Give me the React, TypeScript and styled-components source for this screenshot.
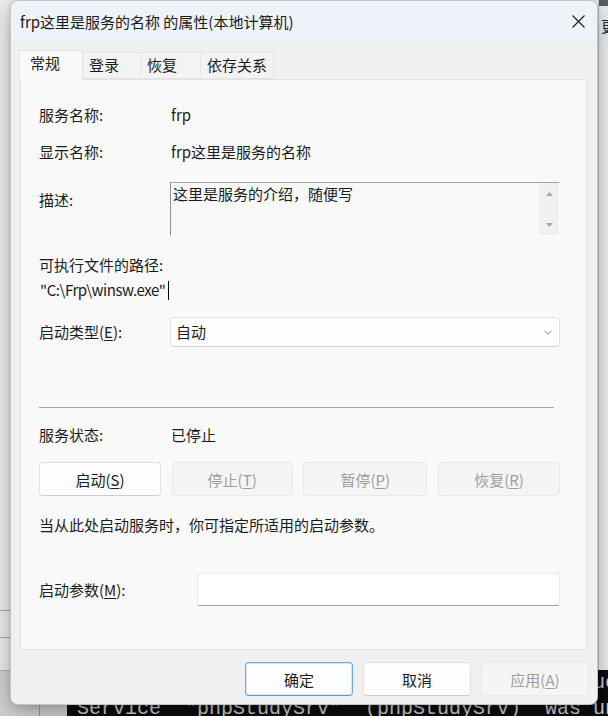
import React from "react";
import styled, { createGlobalStyle } from "styled-components";

const GlobalStyle = createGlobalStyle`
  html, body {
    margin: 0;
    padding: 0;
    background: #ebebeb;
  }
  body {
    font-family: "Noto Sans CJK SC", "Noto Sans", sans-serif;
    color: #1b1b1b;
  }
  * { box-sizing: border-box; }
`;

const Desktop = styled.div`
  position: relative;
  width: 608px;
  height: 716px;
  overflow: hidden;
  background: #ececec;
`;

/* ---------- windows lying behind the dialog ---------- */

const LeftWindow = styled.div`
  position: absolute;
  left: 0;
  top: 0;
  width: 67px;
  height: 716px;
  background: #eeeeee;
  display: flex;
  flex-direction: column;
`;

const LeftRule = styled.div<{ $mt: number }>`
  margin-top: ${(p) => p.$mt}px;
  height: 1px;
  background: #a9a9a9;
`;

const LeftFoot = styled.div`
  margin-top: auto;
  height: 46px;
  background: #d3d3d3;
  border-top: 1px solid #b8b8b8;
  display: flex;
`;

const LeftFootCell = styled.div`
  width: 40px;
  border-right: 1px solid #9c9c9c;
`;

const RightWindow = styled.div`
  position: absolute;
  left: 598px;
  top: 0;
  width: 10px;
  height: 672px;
  background: #f0f0f0;
  border-left: 1px solid #c4c4c4;
  display: flex;
  flex-direction: column;
`;

const RightTop = styled.div`
  height: 6px;
  background: #5d5d5d;
`;

const RightHeader = styled.div`
  height: 40px;
  background: #e9eef6;
  font-size: 15px;
  line-height: 40px;
  padding-left: 2px;
  white-space: nowrap;
  color: #222;
`;

const Console = styled.div`
  position: absolute;
  left: 67px;
  top: 670px;
  right: 0;
  bottom: 0;
  background: #0c0c0c;
  color: #cccccc;
  font-family: "Liberation Mono", "DejaVu Sans Mono", monospace;
  font-size: 20px;
  line-height: 26px;
  padding-left: 10px;
  white-space: pre;
  overflow: hidden;
`;

const ConsoleLine = styled.div<{ $right?: boolean }>`
  text-align: ${(p) => (p.$right ? "right" : "left")};
  margin-right: ${(p) => (p.$right ? -9 : 0)}px;
`;

/* ---------- the properties dialog ---------- */

const Dialog = styled.div`
  position: absolute;
  left: 10px;
  top: 0;
  width: 588px;
  height: 705px;
  border: 1px solid rgba(0, 0, 0, 0.18);
  border-radius: 8px;
  overflow: hidden;
  background: #f0f0f0;
  box-shadow: 0 8px 28px rgba(0, 0, 0, 0.28), 0 2px 6px rgba(0, 0, 0, 0.12);
  display: flex;
  flex-direction: column;
`;

const TitleBar = styled.div`
  height: 39px;
  flex: none;
  background: #eef2f9;
  display: flex;
  align-items: center;
  padding-left: 9px;
`;

const Title = styled.div`
  flex: 1;
  font-size: 15px;
  line-height: 20px;
  color: #1a1a1a;
  white-space: nowrap;
  padding-top: 2px;
`;

const CloseButton = styled.div`
  width: 38px;
  height: 39px;
  display: flex;
  align-items: center;
  justify-content: center;
  padding-top: 2px;
`;

const Body = styled.div`
  flex: 1;
  display: flex;
  flex-direction: column;
  padding-top: 10px;
`;

const TabStrip = styled.div`
  display: flex;
  align-items: flex-end;
  height: 29px;
  margin-left: 8px;
  position: relative;
  z-index: 1;
`;

const Tab = styled.div<{ $w: number; $active?: boolean }>`
  width: ${(p) => p.$w}px;
  height: ${(p) => (p.$active ? 30 : 27)}px;
  margin-bottom: ${(p) => (p.$active ? -1 : 0)}px;
  padding-left: ${(p) => (p.$active ? 10 : 6)}px;
  background: ${(p) => (p.$active ? "#f9f9f9" : "#f3f3f3")};
  border: 1px solid ${(p) => (p.$active ? "#e3e3e3" : "#e6e6e6")};
  border-bottom: ${(p) => (p.$active ? "none" : "1px solid #e3e3e3")};
  border-left-width: ${(p) => (p.$active ? 1 : 0)}px;
  font-size: 15px;
  line-height: ${(p) => (p.$active ? 23 : 23)}px;
  color: #1b1b1b;
  white-space: nowrap;
`;

const Panel = styled.div`
  height: 571px;
  margin: 0 10px 0 9px;
  background: #f9f9f9;
  border: 1px solid #e3e3e3;
  padding: 0 26px 0 18px;
  display: flex;
  flex-direction: column;
`;

const Row = styled.div<{ $mt: number; $h?: number; $col?: number }>`
  margin-top: ${(p) => p.$mt}px;
  height: ${(p) => p.$h ?? 20}px;
  display: grid;
  grid-template-columns: ${(p) => p.$col ?? 131}px 1fr;
  align-items: center;
  font-size: 15px;
  line-height: 20px;
`;

const TopRow = styled(Row)`
  align-items: start;
`;

const Label = styled.div<{ $pt?: number }>`
  padding-top: ${(p) => p.$pt ?? 0}px;
  white-space: nowrap;
  color: #1b1b1b;
`;

const Value = styled.div`
  padding-left: 1px;
  white-space: nowrap;
  color: #1b1b1b;
`;

const PlainLine = styled.div<{ $mt: number }>`
  margin-top: ${(p) => p.$mt}px;
  font-size: 15px;
  line-height: 20px;
  white-space: nowrap;
  color: #1b1b1b;
`;

const PathLine = styled(PlainLine)`
  padding-left: 1px;
  letter-spacing: -0.45px;
  display: flex;
  align-items: center;
`;

const Caret = styled.span`
  display: inline-block;
  width: 1px;
  height: 19px;
  margin-left: 3px;
  background: #000;
`;

const DescBox = styled.div`
  height: 54px;
  display: flex;
  background: #f8f8f8;
  border-top: 1px solid #a3a3a3;
  border-left: 1px solid #8e8e8e;
  border-right: 1px solid #ffffff;
  border-bottom: 1px solid #ffffff;
`;

const DescText = styled.div`
  flex: 1;
  padding: 1px 0 0 2px;
  white-space: nowrap;
`;

const ScrollTrack = styled.div`
  width: 20px;
  background: #f0f0f0;
  display: flex;
  flex-direction: column;
  align-items: center;
  justify-content: space-between;
  padding: 9px 0 8px;
`;

const Combo = styled.div`
  height: 30px;
  background: #fdfdfd;
  border: 1px solid #e4e4e4;
  border-bottom-color: #d2d2d2;
  border-radius: 4px;
  display: flex;
  align-items: center;
  justify-content: space-between;
  padding: 0 7px 0 5px;
`;

const Separator = styled.div`
  margin-top: 60px;
  margin-right: 6px;
  height: 1px;
  background: #a6a6a6;
`;

const ButtonRow = styled.div`
  margin-top: 17px;
  display: grid;
  grid-template-columns: 122px 121px 124px 122px;
  column-gap: 10px;
  justify-content: space-between;
`;

const Button = styled.div<{ $disabled?: boolean; $default?: boolean; $w?: number }>`
  ${(p) => (p.$w ? `width: ${p.$w}px;` : "")}
  height: 34px;
  border-radius: 4px;
  display: flex;
  align-items: center;
  justify-content: center;
  font-size: 15px;
  white-space: nowrap;
  background: ${(p) => (p.$disabled ? "#f5f5f5" : "#fdfdfd")};
  color: ${(p) => (p.$disabled ? "#9d9d9d" : "#1b1b1b")};
  border: 1px solid
    ${(p) => (p.$default ? "#6ea7e3" : p.$disabled ? "#e9e9e9" : "#e1e1e1")};
  border-bottom-color: ${(p) =>
    p.$default ? "#5a98dc" : p.$disabled ? "#e9e9e9" : "#cbcbcb"};
  box-shadow: ${(p) => (p.$default ? "inset 0 0 0 1px #d6e7f8" : "none")};
`;

const Key = styled.span`
  text-decoration: underline;
  text-underline-offset: 2px;
  text-decoration-thickness: 1px;
`;

const ParamInput = styled.div`
  height: 33px;
  background: #ffffff;
  border: 1px solid #ececec;
  border-bottom: 1px solid #a2a2a2;
  border-radius: 3px;
`;

const Footer = styled.div`
  margin-top: 12px;
  padding: 0 8px 0 0;
  display: flex;
  justify-content: flex-end;
  gap: 10px;
`;

const Arrow = ({ up }: { up?: boolean }) => (
  <svg width="7" height="4" viewBox="0 0 7 4">
    <path d={up ? "M0 4 L3.5 0 L7 4 Z" : "M0 0 L3.5 4 L7 0 Z"} fill="#a6a6a6" />
  </svg>
);

const Chevron = () => (
  <svg width="8" height="5" viewBox="0 0 8 5">
    <path d="M0.5 0.8 L4 4.2 L7.5 0.8" fill="none" stroke="#8a8a8a" strokeWidth="1" />
  </svg>
);

const CloseIcon = () => (
  <svg width="13" height="13" viewBox="0 0 13 13">
    <path d="M0.5 0.5 L12.5 12.5 M12.5 0.5 L0.5 12.5" stroke="#1a1a1a" strokeWidth="1.1" />
  </svg>
);

export default function App() {
  return (
    <>
      <GlobalStyle />
      <Desktop>
        <LeftWindow>
          <LeftRule $mt={610} />
          <LeftRule $mt={26} />
          <LeftFoot>
            <LeftFootCell />
          </LeftFoot>
        </LeftWindow>

        <RightWindow>
          <RightTop />
          <RightHeader>更</RightHeader>
        </RightWindow>

        <Console>
          <ConsoleLine $right>continue</ConsoleLine>
          <ConsoleLine>Service  "phpStudySrv"  (phpStudySrv)  was uninstalled.</ConsoleLine>
        </Console>

        <Dialog>
          <TitleBar>
            <Title>frp这里是服务的名称 的属性(本地计算机)</Title>
            <CloseButton>
              <CloseIcon />
            </CloseButton>
          </TitleBar>

          <Body>
            <TabStrip>
              <Tab $w={64} $active>常规</Tab>
              <Tab $w={58}>登录</Tab>
              <Tab $w={60}>恢复</Tab>
              <Tab $w={73}>依存关系</Tab>
            </TabStrip>

            <Panel>
              <Row $mt={25}>
                <Label>服务名称:</Label>
                <Value>frp</Value>
              </Row>
              <Row $mt={17}>
                <Label>显示名称:</Label>
                <Value>frp这里是服务的名称</Value>
              </Row>
              <TopRow $mt={20} $h={54}>
                <Label $pt={8}>描述:</Label>
                <DescBox>
                  <DescText>这里是服务的介绍，随便写</DescText>
                  <ScrollTrack>
                    <Arrow up />
                    <Arrow />
                  </ScrollTrack>
                </DescBox>
              </TopRow>

              <PlainLine $mt={19}>可执行文件的路径:</PlainLine>
              <PathLine $mt={5}>
                "C:\Frp\winsw.exe"
                <Caret />
              </PathLine>

              <Row $mt={17} $h={30}>
                <Label>
                  启动类型(<Key>E</Key>):
                </Label>
                <Combo>
                  <span>自动</span>
                  <Chevron />
                </Combo>
              </Row>

              <Separator />

              <Row $mt={17}>
                <Label>服务状态:</Label>
                <Value>已停止</Value>
              </Row>

              <ButtonRow>
                <Button>
                  启动(<Key>S</Key>)
                </Button>
                <Button $disabled>
                  停止(<Key>T</Key>)
                </Button>
                <Button $disabled>
                  暂停(<Key>P</Key>)
                </Button>
                <Button $disabled>
                  恢复(<Key>R</Key>)
                </Button>
              </ButtonRow>

              <PlainLine $mt={19}>当从此处启动服务时，你可指定所适用的启动参数。</PlainLine>

              <Row $mt={38} $h={33} $col={158}>
                <Label>
                  启动参数(<Key>M</Key>):
                </Label>
                <ParamInput />
              </Row>
            </Panel>

            <Footer>
              <Button $default $w={108}>确定</Button>
              <Button $w={108}>取消</Button>
              <Button $disabled $w={108}>
                应用(<Key>A</Key>)
              </Button>
            </Footer>
          </Body>
        </Dialog>
      </Desktop>
    </>
  );
}
